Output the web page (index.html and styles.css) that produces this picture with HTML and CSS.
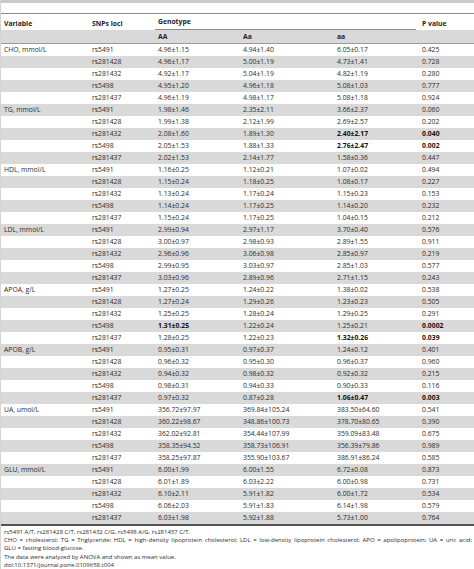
FILE: index.html
```html
<!DOCTYPE html>
<html>
<head>
<meta charset="utf-8">
<link rel="stylesheet" href="styles.css">
</head>
<body>
<div class="page">
  <div class="topband"></div>
  <table class="data">
    <colgroup>
      <col class="c1"><col class="c2"><col class="c3"><col class="c4"><col class="c5"><col class="c6">
    </colgroup>
    <thead>
      <tr class="h1">
        <th>Variable</th>
        <th>SNPs loci</th>
        <th colspan="3" class="geno"><div class="geno-in">Genotype</div></th>
        <th>P value</th>
      </tr>
      <tr class="h2">
        <th></th><th></th><th>AA</th><th>Aa</th><th>aa</th><th></th>
      </tr>
    </thead>
    <tbody>
      <tr><td>CHO, mmol/L</td><td>rs5491</td><td>4.96±1.15</td><td>4.94±1.40</td><td>6.05±0.17</td><td>0.425</td></tr>
      <tr><td></td><td>rs281428</td><td>4.96±1.17</td><td>5.00±1.19</td><td>4.73±1.41</td><td>0.728</td></tr>
      <tr><td></td><td>rs281432</td><td>4.92±1.17</td><td>5.04±1.19</td><td>4.82±1.19</td><td>0.280</td></tr>
      <tr><td></td><td>rs5498</td><td>4.95±1.20</td><td>4.96±1.18</td><td>5.08±1.03</td><td>0.777</td></tr>
      <tr><td></td><td>rs281437</td><td>4.96±1.19</td><td>4.98±1.17</td><td>5.08±1.18</td><td>0.924</td></tr>
      <tr><td>TG, mmol/L</td><td>rs5491</td><td>1.98±1.46</td><td>2.35±2.11</td><td>3.66±2.37</td><td>0.060</td></tr>
      <tr><td></td><td>rs281428</td><td>1.99±1.38</td><td>2.12±1.99</td><td>2.69±2.57</td><td>0.202</td></tr>
      <tr><td></td><td>rs281432</td><td>2.08±1.60</td><td>1.89±1.30</td><td class="b">2.40±2.17</td><td class="b">0.040</td></tr>
      <tr><td></td><td>rs5498</td><td>2.05±1.53</td><td>1.88±1.33</td><td class="b">2.76±2.47</td><td class="b">0.002</td></tr>
      <tr><td></td><td>rs281437</td><td>2.02±1.53</td><td>2.14±1.77</td><td>1.58±0.36</td><td>0.447</td></tr>
      <tr><td>HDL, mmol/L</td><td>rs5491</td><td>1.16±0.25</td><td>1.12±0.21</td><td>1.07±0.02</td><td>0.494</td></tr>
      <tr><td></td><td>rs281428</td><td>1.15±0.24</td><td>1.18±0.25</td><td>1.08±0.17</td><td>0.227</td></tr>
      <tr><td></td><td>rs281432</td><td>1.13±0.24</td><td>1.17±0.24</td><td>1.15±0.23</td><td>0.153</td></tr>
      <tr><td></td><td>rs5498</td><td>1.14±0.24</td><td>1.17±0.25</td><td>1.14±0.20</td><td>0.232</td></tr>
      <tr><td></td><td>rs281437</td><td>1.15±0.24</td><td>1.17±0.25</td><td>1.04±0.15</td><td>0.212</td></tr>
      <tr><td>LDL, mmol/L</td><td>rs5491</td><td>2.99±0.94</td><td>2.97±1.17</td><td>3.70±0.40</td><td>0.576</td></tr>
      <tr><td></td><td>rs281428</td><td>3.00±0.97</td><td>2.98±0.93</td><td>2.89±1.55</td><td>0.911</td></tr>
      <tr><td></td><td>rs281432</td><td>2.96±0.96</td><td>3.06±0.98</td><td>2.85±0.97</td><td>0.219</td></tr>
      <tr><td></td><td>rs5498</td><td>2.99±0.95</td><td>3.03±0.97</td><td>2.85±1.03</td><td>0.577</td></tr>
      <tr><td></td><td>rs281437</td><td>3.03±0.96</td><td>2.89±0.96</td><td>2.71±1.15</td><td>0.243</td></tr>
      <tr><td>APOA, g/L</td><td>rs5491</td><td>1.27±0.25</td><td>1.24±0.22</td><td>1.38±0.02</td><td>0.538</td></tr>
      <tr><td></td><td>rs281428</td><td>1.27±0.24</td><td>1.29±0.26</td><td>1.23±0.23</td><td>0.505</td></tr>
      <tr><td></td><td>rs281432</td><td>1.25±0.25</td><td>1.28±0.24</td><td>1.29±0.25</td><td>0.291</td></tr>
      <tr><td></td><td>rs5498</td><td class="b">1.31±0.25</td><td>1.22±0.24</td><td>1.25±0.21</td><td class="b">0.0002</td></tr>
      <tr><td></td><td>rs281437</td><td>1.28±0.25</td><td>1.22±0.23</td><td class="b">1.32±0.26</td><td class="b">0.039</td></tr>
      <tr><td>APOB, g/L</td><td>rs5491</td><td>0.95±0.31</td><td>0.97±0.37</td><td>1.24±0.12</td><td>0.401</td></tr>
      <tr><td></td><td>rs281428</td><td>0.96±0.32</td><td>0.95±0.30</td><td>0.96±0.37</td><td>0.960</td></tr>
      <tr><td></td><td>rs281432</td><td>0.94±0.32</td><td>0.98±0.32</td><td>0.92±0.32</td><td>0.215</td></tr>
      <tr><td></td><td>rs5498</td><td>0.98±0.31</td><td>0.94±0.33</td><td>0.90±0.33</td><td>0.116</td></tr>
      <tr><td></td><td>rs281437</td><td>0.97±0.32</td><td>0.87±0.28</td><td class="b">1.06±0.47</td><td class="b">0.003</td></tr>
      <tr><td>UA, umol/L</td><td>rs5491</td><td>356.72±97.97</td><td>369.84±105.24</td><td>383.50±64.60</td><td>0.541</td></tr>
      <tr><td></td><td>rs281428</td><td>360.22±98.67</td><td>348.86±100.73</td><td>378.70±80.65</td><td>0.390</td></tr>
      <tr><td></td><td>rs281432</td><td>362.02±92.81</td><td>354.44±107.99</td><td>359.09±83.48</td><td>0.675</td></tr>
      <tr><td></td><td>rs5498</td><td>358.35±94.52</td><td>358.73±106.91</td><td>356.39±79.86</td><td>0.989</td></tr>
      <tr><td></td><td>rs281437</td><td>358.25±97.87</td><td>355.90±103.67</td><td>386.91±86.24</td><td>0.585</td></tr>
      <tr><td>GLU, mmol/L</td><td>rs5491</td><td>6.00±1.99</td><td>6.00±1.55</td><td>6.72±0.08</td><td>0.873</td></tr>
      <tr><td></td><td>rs281428</td><td>6.01±1.89</td><td>6.03±2.22</td><td>6.00±0.98</td><td>0.731</td></tr>
      <tr><td></td><td>rs281432</td><td>6.10±2.11</td><td>5.91±1.82</td><td>6.00±1.72</td><td>0.534</td></tr>
      <tr><td></td><td>rs5498</td><td>6.06±2.03</td><td>5.91±1.83</td><td>6.14±1.98</td><td>0.579</td></tr>
      <tr><td></td><td>rs281437</td><td>6.03±1.98</td><td>5.92±1.88</td><td>5.73±1.00</td><td>0.764</td></tr>
    </tbody>
  </table>
  <div class="notes">
    <p>rs5491 A/T, rs281428 C/T, rs281432 C/G, rs5498 A/G, rs281437 C/T.</p>
    <p class="just">CHO = cholesterol; TG = Triglyceride; HDL = high-density lipoprotein cholesterol; LDL = low-density lipoprotein cholesterol; APO = apolipoprotein; UA = uric acid;</p>
    <p>GLU = fasting blood-glucose.</p>
    <p>The data were analyzed by ANOVA and shown as mean value.</p>
    <p>doi:10.1371/journal.pone.0109658.t004</p>
  </div>
</div>
</body>
</html>
```

FILE: styles.css
```css
html, body {
  margin: 0;
  padding: 0;
  background: #ffffff;
}
body {
  font-family: "Open Sans", "DejaVu Sans", sans-serif;
  font-size: 6.8px;
  color: #2b2b2b;
}
.page {
  width: 474px;
  border-left: 1px solid #d4d4d4;
  box-sizing: border-box;
}
.topband {
  height: 3px;
  background: #c9c9c9;
  margin-bottom: 10px;
}
.data {
  width: 473px;
  border-collapse: collapse;
  table-layout: fixed;
  border-top: 1px solid #8c8c8c;
  border-bottom: 2px solid #555555;
}
.c1 { width: 88px; }
.c2 { width: 66px; }
.c3 { width: 85px; }
.c4 { width: 94px; }
.c5 { width: 85px; }
.c6 { width: 55px; }
th, td {
  padding: 0 0 0 3px;
  text-align: left;
  white-space: nowrap;
  line-height: 12px;
  height: 12px;
  vertical-align: middle;
}
th {
  font-weight: bold;
  color: #1e1e1e;
}
.h1 th {
  height: 15px;
  vertical-align: bottom;
  line-height: 12px;
  padding-bottom: 0;
}
.h1 th.geno {
  padding: 0;
}
.geno-in {
  padding-left: 3px;
  margin-right: 3px;
  border-bottom: 1px solid #8c8c8c;
  line-height: 12px;
  padding-top: 2px;
  padding-bottom: 1px;
}
.h2 th {
  background: #d9d9d9;
  height: 13px;
  line-height: 13px;
  border-bottom: 1px solid #9a9a9a;
}
tbody tr:nth-child(even) td {
  background: #d9d9d9;
}
td.b {
  font-weight: bold;
  color: #111111;
}
.notes {
  padding: 2px 2px 0 3px;
}
.notes p {
  margin: 0;
  line-height: 8.2px;
  font-size: 6px;
}
.notes p.just {
  text-align: justify;
  text-align-last: justify;
}
```
